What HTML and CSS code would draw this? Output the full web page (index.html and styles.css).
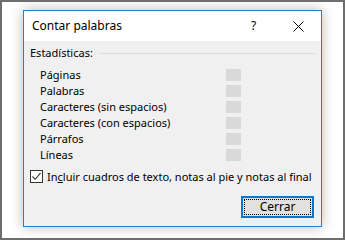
FILE: index.html
```html
<!DOCTYPE html>
<html lang="es">
<head>
<meta charset="utf-8">
<link rel="stylesheet" href="styles.css">
</head>
<body>
<div class="frame">
  <div class="dialog">
    <div class="titlebar">
      <span class="title">Contar palabras</span>
      <span class="help">?</span>
      <span class="close">
        <svg width="11" height="11" viewBox="0 0 11 11"><path d="M0.5 0.5 L10.5 10.5 M10.5 0.5 L0.5 10.5" stroke="#000" stroke-width="1" fill="none"/></svg>
      </span>
    </div>
    <div class="content">
      <div class="group-head">
        <span class="group-label">Estadísticas:</span>
        <span class="group-line"></span>
      </div>
      <div class="stats">
        <span class="lbl">Páginas</span><span class="val"></span>
        <span class="lbl">Palabras</span><span class="val"></span>
        <span class="lbl">Caracteres (sin espacios)</span><span class="val"></span>
        <span class="lbl">Caracteres (con espacios)</span><span class="val"></span>
        <span class="lbl">Párrafos</span><span class="val"></span>
        <span class="lbl">Líneas</span><span class="val"></span>
      </div>
      <label class="check">
        <span class="box">
          <svg width="11" height="11" viewBox="0 0 11 11"><path d="M1.5 5.5 L4.2 8.3 L9.6 1.8" stroke="#333" stroke-width="1.1" fill="none"/></svg>
        </span>
        <span class="check-text">In<u>c</u>luir cuadros de texto, notas al pie y notas al final</span>
      </label>
      <div class="actions">
        <button class="btn"><span class="btn-inner">Cerrar</span></button>
      </div>
    </div>
  </div>
</div>
</body>
</html>
```

FILE: styles.css
```css
* { box-sizing: border-box; }
html, body { margin: 0; padding: 0; background: #fff; }
body { font-family: "Noto Sans", "DejaVu Sans", sans-serif; font-size: 11px; color: #000; }

.frame {
  width: 345px;
  height: 240px;
  border: 2px solid #6e6e6e;
  background: #fff;
  padding: 8px 0 0 21px;
  overflow: hidden;
}

.dialog {
  width: 299px;
  height: 217px;
  border: 1px solid #2b7cd3;
  background: #f0f0f0;
  box-shadow: 0 0 12px rgba(0,0,0,0.28);
  display: flex;
  flex-direction: column;
  overflow: hidden;
}

.titlebar {
  height: 30px;
  flex: none;
  background: #fff;
  display: flex;
  align-items: center;
  padding-left: 8px;
  font-size: 12px;
}
.title { flex: 1; line-height: 16px; }
.help { width: 12px; margin-right: 30px; line-height: 16px; }
.close { width: 11px; height: 11px; margin-right: 17px; display: flex; }

.content {
  flex: 1;
  padding: 4px 6px 0 6px;
  display: flex;
  flex-direction: column;
}

.group-head {
  display: flex;
  align-items: center;
  height: 16px;
}
.group-label { line-height: 16px; }
.group-line {
  flex: 1;
  height: 1px;
  background: #dcdcdc;
  margin-left: 6px;
  margin-top: 1px;
}

.stats {
  display: grid;
  grid-template-columns: 186px 15px;
  grid-auto-rows: 16px;
  align-items: center;
  margin-top: 6px;
  padding-left: 10px;
}
.lbl { line-height: 16px; white-space: nowrap; }
.val { width: 15px; height: 12px; background: #d9d9d9; }

.check {
  display: flex;
  align-items: center;
  margin-top: 7px;
  height: 13px;
}
.box {
  width: 13px;
  height: 13px;
  border: 1px solid #333;
  background: #fff;
  display: flex;
  align-items: center;
  justify-content: center;
  margin-right: 4px;
}
.box svg { display: block; }
.check-text { white-space: nowrap; line-height: 16px; }

.actions {
  display: flex;
  justify-content: flex-end;
  margin-top: 13px;
  padding-right: 1px;
}
.btn {
  width: 73px;
  height: 22px;
  border: 2px solid #0078d7;
  background: #e1e1e1;
  padding: 1px;
  font: inherit;
  font-size: 12px;
  color: #000;
  display: flex;
}
.btn-inner {
  flex: 1;
  border: 1px dotted #000;
  display: flex;
  align-items: center;
  justify-content: center;
  line-height: 14px;
}
```
